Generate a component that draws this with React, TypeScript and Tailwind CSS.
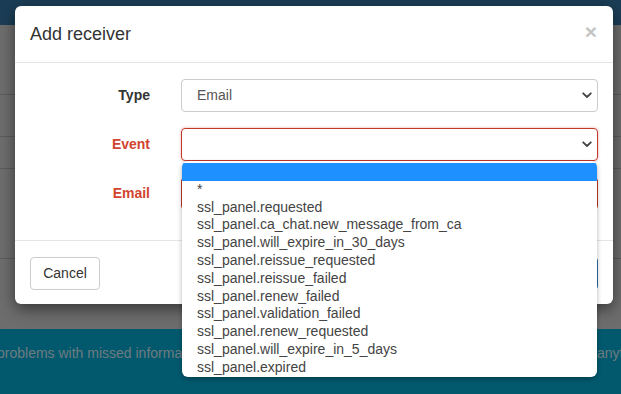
import React from "react";

const events = [
  "",
  "*",
  "ssl_panel.requested",
  "ssl_panel.ca_chat.new_message_from_ca",
  "ssl_panel.will_expire_in_30_days",
  "ssl_panel.reissue_requested",
  "ssl_panel.reissue_failed",
  "ssl_panel.renew_failed",
  "ssl_panel.validation_failed",
  "ssl_panel.renew_requested",
  "ssl_panel.will_expire_in_5_days",
  "ssl_panel.expired",
];

function Chevron() {
  return (
    <svg width="10" height="7" viewBox="0 0 10 7" className="shrink-0">
      <path d="M1.2 1.3 L5 5 L8.8 1.3" fill="none" stroke="#444" strokeWidth="1.8" strokeLinecap="round" strokeLinejoin="round" />
    </svg>
  );
}

export default function App() {
  return (
    <div
      className="relative h-[394px] w-[621px] overflow-hidden bg-[#6d6d6d]"
      style={{ fontFamily: '"Liberation Sans", Arial, sans-serif' }}
    >
      {/* background page under overlay */}
      <div className="flex h-full flex-col">
        <div className="h-[25px] bg-[#1b3e56]" />
        <div className="flex flex-col bg-[#6d6d6d]">
          <div className="h-[70px] border-b border-[#5c5c5c]" />
          <div className="h-[42px] border-b border-[#5c5c5c]" />
          <div className="h-[32px] border-b border-[#5c5c5c]" />
          <div className="h-[90px] border-b border-[#5c5c5c]" />
          <div className="h-[70px]" />
        </div>
        <div className="flex-1 bg-[#02596e] pt-[14px]">
          <div className="flex whitespace-nowrap text-[14px] text-[#6f7c80] -ml-[3px]">
            <span className="w-[600px] shrink-0">problems with missed information and notifications please contact</span>
            <span>anything</span>
          </div>
        </div>
      </div>

      {/* modal */}
      <div className="absolute left-[15px] top-[6px] w-[598px] rounded-[6px] bg-white shadow-[0_5px_15px_rgba(0,0,0,0.5)]">
        <div className="flex h-[57px] items-center justify-between border-b border-[#e5e5e5] px-[15px]">
          <h4 className="text-[18px] text-[#333] pt-[1px]">Add receiver</h4>
          <span className="-mt-[6px] mr-[1px] text-[21px] font-bold leading-none text-[#c4c4c4]">×</span>
        </div>

        <div className="flex flex-col gap-[16px] px-[15px] pt-[16px] pb-[30px]">
          <div className="flex items-center">
            <label className="w-[135px] shrink-0 pr-[15px] text-right text-[14px] font-bold text-[#333]">Type</label>
            <div className="ml-[16px] flex h-[33px] flex-1 items-center justify-between rounded-[4px] border border-[#ccc] pl-[15px] pr-[5px] text-[14px] text-[#555]">
              <span>Email</span>
              <Chevron />
            </div>
          </div>
          <div className="flex items-center">
            <label className="w-[135px] shrink-0 pr-[15px] text-right text-[14px] font-bold text-[#d2442f]">Event</label>
            <div className="ml-[16px] flex h-[33px] flex-1 items-center justify-end rounded-[4px] border border-[#c0392b] pr-[5px] shadow-[0_0_3px_rgba(200,50,40,0.4)]">
              <Chevron />
            </div>
          </div>
          <div className="flex items-center">
            <label className="w-[135px] shrink-0 pr-[15px] text-right text-[14px] font-bold text-[#d2442f]">Email</label>
            <div className="ml-[16px] h-[33px] flex-1 rounded-[4px] border border-[#c0392b]" />
          </div>
        </div>

        <div className="flex items-center justify-between border-t border-[#e5e5e5] px-[15px] pt-[16px] pb-[14px]">
          <button className="h-[33px] w-[70px] rounded-[4px] border border-[#ccc] bg-white text-[14px] text-[#333]">Cancel</button>
          <button className="h-[33px] w-[60px] rounded-[4px] border border-[#2e6da4] bg-[#337ab7] text-[14px] text-white">Add</button>
        </div>
      </div>

      {/* open dropdown list */}
      <div className="absolute left-[182px] top-[161px] w-[415px] overflow-hidden rounded-[6px] bg-white pt-[2px] shadow-[0_2px_5px_rgba(0,0,0,0.3)]">
        {events.map((e, i) => (
          <div
            key={i}
            className={
              "h-[17.8px] whitespace-nowrap pl-[15px] text-[14px] leading-[17.8px] text-[#444] " +
              (i === 0 ? "bg-[#1e90ff]" : "")
            }
          >
            {e}
          </div>
        ))}
      </div>
    </div>
  );
}
